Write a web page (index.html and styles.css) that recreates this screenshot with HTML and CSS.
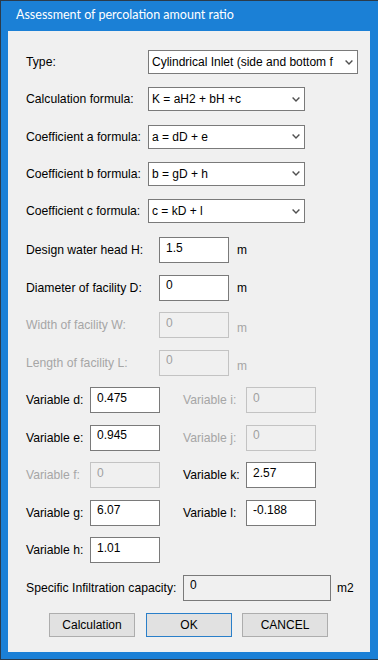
FILE: index.html
```html
<!DOCTYPE html>
<html lang="en">
<head>
	<meta charset="UTF-8">
	<title>Assessment of percolation amount ratio</title>
	<link rel="stylesheet" href="styles.css">
</head>
<body>
	<div class="window">
		<div class="titlebar">Assessment of percolation amount ratio</div>
		<div class="panel">
			<!-- formula choices -->
			<div class="row combo-row first">
				<label class="lbl w-combo">Type:</label>
				<div class="combo wide">
					<span class="combo-text">Cylindrical Inlet (side and bottom f</span>
					<svg class="chev" width="8" height="5" viewBox="0 0 8 5"><path d="M0.6 0.6 L4 4 L7.4 0.6" fill="none" stroke="#505050" stroke-width="1.4"/></svg>
				</div>
			</div>
			<div class="row combo-row">
				<label class="lbl w-combo">Calculation formula:</label>
				<div class="combo">
					<span class="combo-text">K = aH2 + bH +c</span>
					<svg class="chev" width="8" height="5" viewBox="0 0 8 5"><path d="M0.6 0.6 L4 4 L7.4 0.6" fill="none" stroke="#505050" stroke-width="1.4"/></svg>
				</div>
			</div>
			<div class="row combo-row">
				<label class="lbl w-combo">Coefficient a formula:</label>
				<div class="combo">
					<span class="combo-text">a = dD + e</span>
					<svg class="chev" width="8" height="5" viewBox="0 0 8 5"><path d="M0.6 0.6 L4 4 L7.4 0.6" fill="none" stroke="#505050" stroke-width="1.4"/></svg>
				</div>
			</div>
			<div class="row combo-row">
				<label class="lbl w-combo">Coefficient b formula:</label>
				<div class="combo">
					<span class="combo-text">b = gD + h</span>
					<svg class="chev" width="8" height="5" viewBox="0 0 8 5"><path d="M0.6 0.6 L4 4 L7.4 0.6" fill="none" stroke="#505050" stroke-width="1.4"/></svg>
				</div>
			</div>
			<div class="row combo-row">
				<label class="lbl w-combo">Coefficient c formula:</label>
				<div class="combo">
					<span class="combo-text">c = kD + l</span>
					<svg class="chev" width="8" height="5" viewBox="0 0 8 5"><path d="M0.6 0.6 L4 4 L7.4 0.6" fill="none" stroke="#505050" stroke-width="1.4"/></svg>
				</div>
			</div>

			<!-- facility size -->
			<div class="row field-row first-field">
				<label class="lbl w-field">Design water head H:</label>
				<input class="box" type="text" value="1.5">
				<span class="unit">m</span>
			</div>
			<div class="row field-row">
				<label class="lbl w-field">Diameter of facility D:</label>
				<input class="box" type="text" value="0">
				<span class="unit">m</span>
			</div>
			<div class="row field-row">
				<label class="lbl w-field off">Width of facility W:</label>
				<input class="box" type="text" value="0" disabled>
				<span class="unit off">m</span>
			</div>
			<div class="row field-row">
				<label class="lbl w-field off">Length of facility L:</label>
				<input class="box" type="text" value="0" disabled>
				<span class="unit off">m</span>
			</div>

			<!-- variables -->
			<div class="row field-row">
				<label class="lbl w-var">Variable d:</label>
				<input class="box" type="text" value="0.475">
				<label class="lbl w-var2 off">Variable i:</label>
				<input class="box" type="text" value="0" disabled>
			</div>
			<div class="row field-row">
				<label class="lbl w-var">Variable e:</label>
				<input class="box" type="text" value="0.945">
				<label class="lbl w-var2 off">Variable j:</label>
				<input class="box" type="text" value="0" disabled>
			</div>
			<div class="row field-row">
				<label class="lbl w-var off">Variable f:</label>
				<input class="box" type="text" value="0" disabled>
				<label class="lbl w-var2">Variable k:</label>
				<input class="box" type="text" value="2.57">
			</div>
			<div class="row field-row">
				<label class="lbl w-var">Variable g:</label>
				<input class="box" type="text" value="6.07">
				<label class="lbl w-var2">Variable l:</label>
				<input class="box" type="text" value="-0.188">
			</div>
			<div class="row field-row">
				<label class="lbl w-var">Variable h:</label>
				<input class="box" type="text" value="1.01">
			</div>

			<div class="row field-row">
				<label class="lbl w-spec">Specific Infiltration capacity:</label>
				<input class="box long" type="text" value="0" readonly>
				<span class="unit tight">m2</span>
			</div>

			<div class="buttons">
				<button class="btn">Calculation</button>
				<button class="btn default">OK</button>
				<button class="btn">CANCEL</button>
			</div>
		</div>
	</div>
</body>
</html>
```

FILE: styles.css
```css
*{padding:0;margin:0;box-sizing:border-box;}
body{background:#fff;font-family:"Liberation Sans",Arial,sans-serif;font-size:12px;color:#000;}

.window{width:378px;height:660px;background:#1b80d6;border-top:1px solid #2b3b4b;border-left:1px solid #2b3b4b;border-bottom:1px solid #2b3b4b;padding:0 8px 7px 7px;display:flex;flex-direction:column;}
.titlebar{height:30px;padding:5px 0 0 8px;color:#fff;font-family:Lato,"Noto Sans",sans-serif;font-size:12.5px;line-height:17px;}
.panel{flex:1;background:#f0f0f0;padding:19px 0 0 18px;display:flex;flex-direction:column;}

.row{display:flex;align-items:center;}
.combo-row{height:24px;margin-top:13.25px;}
.combo-row.first{margin-top:0;}
.field-row{height:26px;margin-top:11.5px;}
.field-row.first-field{margin-top:14px;}

.lbl{white-space:nowrap;flex:none;font-size:12.2px;}
.lbl.off,.unit.off{color:#a6a6a6;}
.w-combo{width:122px;}
.w-field{width:133px;}
.w-var{width:64px;}
.w-var2{width:63px;margin-left:23px;}
.w-spec{width:157px;}

/* 下拉框 */
.combo{width:157px;height:24px;background:#fff;border:1px solid #7a7a7a;display:flex;align-items:center;padding:0 4px 0 3px;}
.combo.wide{width:210px;}
.combo-text{flex:1;white-space:nowrap;overflow:hidden;}
.chev{flex:none;margin-left:3px;}

.box{width:70px;height:26px;border:1px solid #7a7a7a;background:#fff;font-family:"Liberation Sans",Arial,sans-serif;font-size:12px;color:#000;padding:2px 4px 7px 6px;outline:none;}
.box:disabled{background:#f0f0f0;border-color:#c3c3c3;color:#a0a0a0;}
.box[readonly]{background:#f0f0f0;}
.box.long{width:148px;}
.unit{margin-left:8px;}
.unit.off{padding-top:6px;}
.unit.tight{margin-left:6px;}

.buttons{display:flex;margin:12.5px 0 0 23px;}
.btn{width:86px;height:24px;background:#e1e1e1;border:1px solid #adadad;font-family:"Liberation Sans",Arial,sans-serif;font-size:12px;color:#000;margin-right:11px;}
.btn.default{border-color:#2a7fc9;margin-right:10px;}
```
